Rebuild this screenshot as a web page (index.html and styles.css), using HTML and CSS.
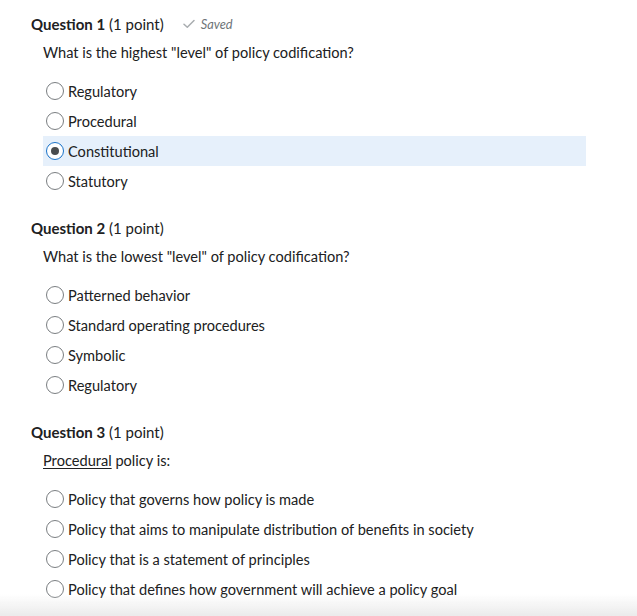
FILE: index.html
```html
<!DOCTYPE html>
<html>
<head>
<meta charset="utf-8">
<link rel="stylesheet" href="styles.css">
</head>
<body>
<div class="quiz">
  <section class="question">
    <div class="q-head"><span class="q-title"><b>Question 1</b> (1 point)</span>
      <span class="saved"><svg class="check" width="12" height="10" viewBox="0 0 12 10"><path d="M1 5.2 L4.3 8.3 L11 1.5" fill="none" stroke="#a9adb0" stroke-width="1.5" stroke-linecap="round" stroke-linejoin="round"/></svg><i>Saved</i></span>
    </div>
    <div class="q-text">What is the highest "level" of policy codification?</div>
    <div class="options">
      <label class="opt"><span class="radio"></span>Regulatory</label>
      <label class="opt"><span class="radio"></span>Procedural</label>
      <label class="opt selected"><span class="radio checked"></span>Constitutional</label>
      <label class="opt"><span class="radio"></span>Statutory</label>
    </div>
  </section>
  <section class="question">
    <div class="q-head"><span class="q-title"><b>Question 2</b> (1 point)</span></div>
    <div class="q-text">What is the lowest "level" of policy codification?</div>
    <div class="options">
      <label class="opt"><span class="radio"></span>Patterned behavior</label>
      <label class="opt"><span class="radio"></span>Standard operating procedures</label>
      <label class="opt"><span class="radio"></span>Symbolic</label>
      <label class="opt"><span class="radio"></span>Regulatory</label>
    </div>
  </section>
  <section class="question">
    <div class="q-head"><span class="q-title"><b>Question 3</b> (1 point)</span></div>
    <div class="q-text"><u>Procedural</u> policy is:</div>
    <div class="options">
      <label class="opt"><span class="radio"></span>Policy that governs how policy is made</label>
      <label class="opt"><span class="radio"></span>Policy that aims to manipulate distribution of benefits in society</label>
      <label class="opt"><span class="radio"></span>Policy that is a statement of principles</label>
      <label class="opt"><span class="radio"></span>Policy that defines how government will achieve a policy goal</label>
    </div>
  </section>
</div>
<div class="bottom-fade"></div>
</body>
</html>
```
FILE: styles.css
```css
html, body {
  margin: 0;
  padding: 0;
  background: #ffffff;
}
body {
  font-family: Lato, "Open Sans", sans-serif;
  font-size: 14.6px;
  color: #202122;
  overflow: hidden;
}
.quiz {
  padding: 14px 0 0 31px;
  width: 555px;
}
.question + .question {
  margin-top: 22px;
}
.q-head {
  display: flex;
  align-items: center;
  height: 20px;
  line-height: 20px;
  font-size: 15px;
  margin-bottom: 9px;
}
.q-title b {
  font-weight: 700;
}
.saved {
  display: flex;
  align-items: center;
  margin-left: 19px;
  color: #6e7477;
  font-size: 12.8px;
}
.saved .check {
  margin-right: 6px;
}
.q-text {
  padding-left: 12px;
  line-height: 20px;
  margin-bottom: 13px;
}
.q-text u {
  text-underline-offset: 2px;
}
.options {
  display: flex;
  flex-direction: column;
  margin-left: 12px;
}
.opt {
  display: flex;
  align-items: center;
  height: 30px;
  padding-left: 3px;
}
.opt.selected {
  background: #e6f0fb;
}
.radio {
  box-sizing: border-box;
  width: 18px;
  height: 18px;
  border: 1px solid #7a7e81;
  border-radius: 50%;
  background: #fff;
  margin-right: 4px;
  display: flex;
  align-items: center;
  justify-content: center;
  flex: none;
}
.radio.checked {
  border: 1.5px solid #1a73c9;
}
.radio.checked::after {
  content: "";
  width: 8px;
  height: 8px;
  border-radius: 50%;
  background: #494c4e;
}
.bottom-fade {
  position: fixed;
  left: 0;
  right: 0;
  bottom: 0;
  height: 22px;
  background: linear-gradient(to bottom, rgba(236,236,236,0), #ebebeb);
}
```
